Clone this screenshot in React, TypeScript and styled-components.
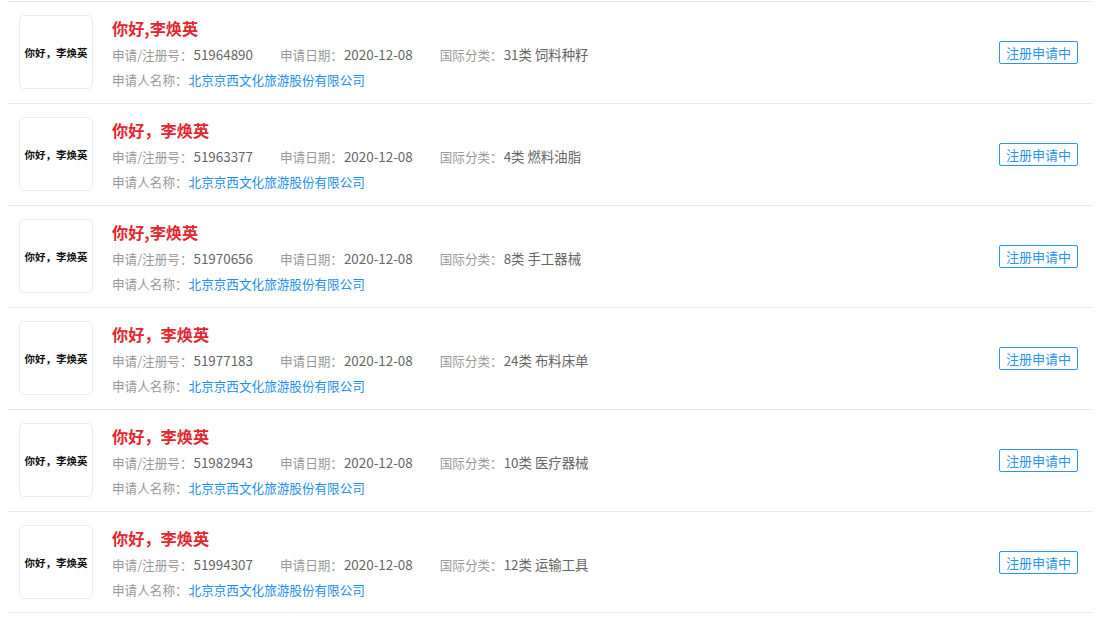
import React from "react";
import styled, { createGlobalStyle } from "styled-components";

const GlobalStyle = createGlobalStyle`
  body {
    margin: 0;
    background: #fff;
    font-family: "Noto Sans CJK SC", "Noto Sans", sans-serif;
  }
`;

const List = styled.div`
  margin: 1px 8px 0;
`;

const Row = styled.div`
  display: flex;
  align-items: flex-start;
  height: 102px;
  box-sizing: border-box;
  padding: 13px 14px 0 11px;
  border-top: 1px solid #e8e8e8;
  &:last-child {
    border-bottom: 1px solid #e8e8e8;
  }
`;

const Logo = styled.div`
  width: 74px;
  height: 74px;
  box-sizing: border-box;
  border: 1px solid #ebebeb;
  border-radius: 5px;
  display: flex;
  align-items: center;
  justify-content: center;
  font-size: 10.5px;
  font-weight: 700;
  color: #111;
  flex-shrink: 0;
`;

const Body = styled.div`
  flex: 1;
  margin-left: 19px;
  padding-top: 1px;
`;

const Title = styled.div`
  font-size: 16.2px;
  line-height: 24px;
  font-weight: 700;
  color: #e4262f;
  margin-bottom: 2px;
`;

const Line = styled.div`
  display: flex;
  align-items: baseline;
  font-size: 12.6px;
  line-height: 25px;
  color: #999;
`;

const Field = styled.span`
  margin-right: 27px;
`;

const Label = styled.span`
  margin-right: 1px;
`;

const Value = styled.span<{ $link?: boolean }>`
  font-size: ${(p) => (p.$link ? "12.6px" : "13.4px")};
  color: ${(p) => (p.$link ? "#1b8ef0" : "#666")};
`;

const Status = styled.div`
  align-self: center;
  margin-top: -13px;
  width: 79px;
  height: 23px;
  box-sizing: border-box;
  border: 1px solid #2b93f0;
  border-radius: 2px;
  color: #2b93f0;
  font-size: 13px;
  line-height: 21px;
  text-align: center;
`;

const rows = [
  { title: "你好,李焕英", no: "51964890", cls: "31类 饲料种籽" },
  { title: "你好，李焕英", no: "51963377", cls: "4类 燃料油脂" },
  { title: "你好,李焕英", no: "51970656", cls: "8类 手工器械" },
  { title: "你好，李焕英", no: "51977183", cls: "24类 布料床单" },
  { title: "你好，李焕英", no: "51982943", cls: "10类 医疗器械" },
  { title: "你好，李焕英", no: "51994307", cls: "12类 运输工具" },
];

export default function App() {
  return (
    <>
      <GlobalStyle />
      <List>
        {rows.map((r) => (
          <Row key={r.no}>
            <Logo>你好，李焕英</Logo>
            <Body>
              <Title>{r.title}</Title>
              <Line>
                <Field>
                  <Label>申请/注册号：</Label>
                  <Value>{r.no}</Value>
                </Field>
                <Field>
                  <Label>申请日期：</Label>
                  <Value>2020-12-08</Value>
                </Field>
                <Field>
                  <Label>国际分类：</Label>
                  <Value>{r.cls}</Value>
                </Field>
              </Line>
              <Line>
                <Label>申请人名称：</Label>
                <Value $link>北京京西文化旅游股份有限公司</Value>
              </Line>
            </Body>
            <Status>注册申请中</Status>
          </Row>
        ))}
      </List>
    </>
  );
}
